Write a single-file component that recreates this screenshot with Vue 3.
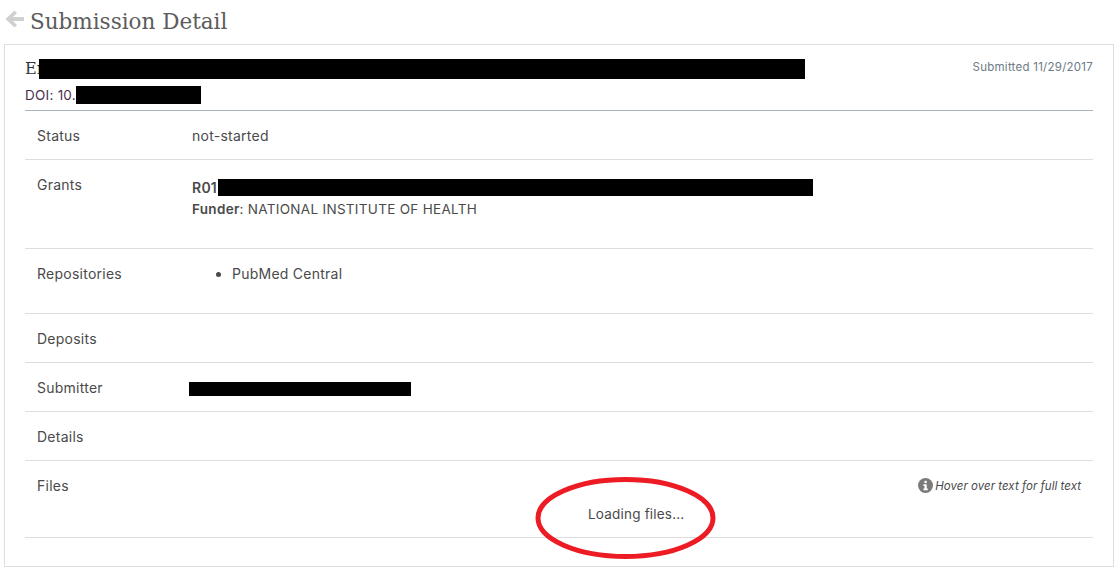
<script setup>
const arrowPath = 'M9.5 0.5 L0.5 9 L9.5 17.5 L12 15 L8 11 H19 V7 H8 L12 3 Z'
</script>

<template>
  <div class="page">
    <header class="head">
      <svg class="back" width="20" height="18" viewBox="0 0 20 18" aria-hidden="true"><path :d="arrowPath" fill="#d0d0d0" /></svg>
      <h1 class="title">Submission Detail</h1>
    </header>

    <section class="card">
      <div class="top">
        <div class="work">
          <div class="name"><span>Er</span><i class="bar name-bar"></i></div>
          <div class="doi"><span>DOI: 10.</span><i class="bar doi-bar"></i></div>
        </div>
        <div class="date">Submitted 11/29/2017</div>
      </div>

      <div class="row r48">
        <div class="label">Status</div>
        <div class="value">not-started</div>
      </div>
      <div class="row grants">
        <div class="label">Grants</div>
        <div class="value">
          <div class="grant-line"><b>R01</b><i class="bar grant-bar"></i></div>
          <div class="funder"><b>Funder</b>: NATIONAL INSTITUTE OF HEALTH</div>
        </div>
      </div>
      <div class="row repos">
        <div class="label">Repositories</div>
        <ul class="value list"><li>PubMed Central</li></ul>
      </div>
      <div class="row r48">
        <div class="label">Deposits</div>
      </div>
      <div class="row r48">
        <div class="label">Submitter</div>
        <div class="value"><i class="bar sub-bar"></i></div>
      </div>
      <div class="row r48">
        <div class="label">Details</div>
      </div>
      <div class="row files">
        <div class="label">Files</div>
        <div class="files-body">
          <div class="hint">
            <svg class="info" width="15" height="15" viewBox="0 0 16 16" aria-hidden="true">
              <circle cx="8" cy="8" r="8" fill="#7a7a7a" />
              <rect x="6.9" y="3" width="2.4" height="2.4" fill="#fff" />
              <path d="M5.8 6.7 H9.3 V11.3 H10.4 V13 H5.8 V11.3 H6.9 V8.4 H5.8 Z" fill="#fff" />
            </svg>
            <em>Hover over text for full text</em>
          </div>
          <div class="loading">Loading files...</div>
        </div>
      </div>
    </section>

    <svg class="circle" width="186" height="86" viewBox="0 0 186 86" aria-hidden="true">
      <ellipse cx="93.5" cy="43" rx="87.5" ry="38.5" fill="none" stroke="#ed1c24" stroke-width="5" />
    </svg>
  </div>
</template>

<style scoped>
.page {
  position: relative;
  width: 1119px;
  height: 574px;
  overflow: hidden;
  background: #fff;
  font-family: Inter, "Open Sans", sans-serif;
  color: #4a4a4a;
  font-size: 14px;
  letter-spacing: 0.25px;
}
.head {
  display: flex;
  align-items: center;
  height: 44px;
  padding-left: 5px;
  box-sizing: border-box;
  padding-bottom: 2px;
}
.back { margin-right: 5px; margin-top: -4px; }
.title {
  margin: 0;
  font-family: "DejaVu Serif", serif;
  font-weight: 400;
  font-size: 21.5px;
  letter-spacing: 0;
  color: #5c5c5c;
}
.card {
  margin-left: 4px;
  width: 1110px;
  height: 523px;
  box-sizing: border-box;
  border: 1px solid #dedede;
  padding: 0 20px;
}
.top {
  display: flex;
  justify-content: space-between;
  height: 66px;
  border-bottom: 1px solid #a5b5c2;
  box-sizing: border-box;
}
.name {
  display: flex;
  align-items: flex-start;
  padding-top: 14px;
  height: 27px;
  font-family: "DejaVu Serif", serif;
  font-size: 16px;
  line-height: 20px;
  letter-spacing: 0;
  color: #333;
}
.bar { display: block; background: #000; flex: none; }
.name-bar { width: 766px; height: 20px; margin-left: -5px; }
.doi {
  display: flex;
  align-items: flex-start;
  font-size: 13.5px;
  line-height: 18px;
  color: #4a3050;
}
.doi span { white-space: nowrap; }
.doi-bar { width: 125px; height: 18px; }
.date {
  padding-top: 14px;
  font-size: 11.5px;
  line-height: 16px;
  color: #6e7a85;
}
.row {
  display: flex;
  box-sizing: border-box;
  border-bottom: 1px solid #dedede;
  padding: 16px 0 0 12px;
  line-height: 17px;
}
.r48 { height: 49px; }
.grants { height: 89px; }
.repos { height: 65px; }
.files { height: 77px; }
.label { width: 155px; flex: none; }
.grant-line { display: flex; height: 17px; margin-top: 3px; align-items: flex-start; }
.grant-line b { font-weight: 600; }
.grant-bar { width: 595px; height: 17px; margin-left: 1px; }
.funder { margin-top: 5px; font-size: 13.5px; letter-spacing: 0.3px; }
.funder b { font-weight: 600; }
.list { margin: 0; padding: 0 0 0 40px; }
.sub-bar { width: 222px; height: 14px; margin: 3px 0 0 -3px; }
.files-body { flex: 1; position: relative; padding-right: 12px; }
.hint {
  display: flex;
  justify-content: flex-end;
  align-items: center;
  gap: 2px;
  font-size: 11.5px;
  letter-spacing: 0.03px;
  height: 17px;
  margin-top: 1px;
}
.info { margin-top: -3px; }
.loading {
  margin-top: 11px;
  padding-left: 396px;
  font-size: 13.5px;
  letter-spacing: 0.2px;
}
.circle {
  position: absolute;
  left: 532px;
  top: 475px;
}
</style>
